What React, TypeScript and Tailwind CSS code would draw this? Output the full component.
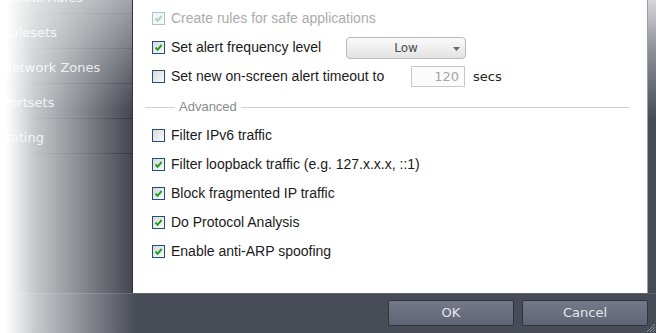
import React from 'react';

const dejavu = { fontFamily: '"DejaVu Sans", Verdana, sans-serif' };

const SIDE_ITEMS = ['Global Rules', 'Rulesets', 'Network Zones', 'Portsets', 'Rating'];

const Check: React.FC<{ checked?: boolean; disabled?: boolean }> = ({ checked, disabled }) => (
  <span
    className={`flex h-[13px] w-[13px] shrink-0 items-center justify-center border ${
      disabled ? 'border-[#a9c0d8] bg-[#f4f6f8]' : 'border-[#1f4f7f] bg-gradient-to-br from-[#d9d9d9] to-[#fbfbfb]'
    }`}
  >
    {checked && (
      <svg width="11" height="11" viewBox="0 0 11 11">
        <path
          d="M2.5 5.5 L4.6 7.8 L8.6 3"
          fill="none"
          stroke={disabled ? '#a6d8a6' : '#22a022'}
          strokeWidth="2"
        />
      </svg>
    )}
  </span>
);

const Row: React.FC<{ checked?: boolean; disabled?: boolean; children: React.ReactNode }> = ({
  checked,
  disabled,
  children,
}) => (
  <div className="flex h-[29px] items-center gap-[6px] pl-[19px]">
    <Check checked={checked} disabled={disabled} />
    {children}
  </div>
);

const App: React.FC = () => {
  return (
    <div
      className="relative flex h-[333px] w-[656px] flex-col overflow-hidden bg-[#484c57]"
      style={{ fontFamily: '"Liberation Sans", Arial, sans-serif' }}
    >
      <div className="flex h-[293px]">
        {/* Sidebar */}
        <div className="relative w-[133px] shrink-0 border-r border-[#2c2f36] bg-[#3e424c]" style={dejavu}>
          <div className="-mt-[21px] flex flex-col">
            {SIDE_ITEMS.map((item) => (
              <div
                key={item}
                className="flex h-[35px] items-center border-b border-[#2b2e35] pl-[2px] pt-[3px] text-[13px] text-[#dcdde0]"
              >
                {item}
              </div>
            ))}
          </div>
          <div className="pointer-events-none absolute inset-0 bg-[linear-gradient(to_bottom,rgba(255,255,255,0.5),rgba(255,255,255,0)_110px)]" />
        </div>

        {/* Main panel */}
        <div className="flex flex-1 flex-col bg-white pt-[4px] text-[14px] text-[#1a1a1a]">
          <Row checked disabled>
            <span className="text-[#ababab]">Create rules for safe applications</span>
          </Row>
          <Row checked>
            <span className="w-[169px]">Set alert frequency level</span>
            <div
              className="relative flex h-[22px] w-[120px] items-center justify-center rounded-[4px] border border-[#b9b9b9] bg-gradient-to-b from-[#fafafa] to-[#e3e3e3] text-[12px] text-[#4a4a4a]"
              style={dejavu}
            >
              Low
              <svg className="absolute right-[5px] top-[9px]" width="7" height="4" viewBox="0 0 7 4">
                <path d="M0 0 H7 L3.5 4 Z" fill="#6a6a6a" />
              </svg>
            </div>
          </Row>
          <Row>
            <span className="w-[234px]">Set new on-screen alert timeout to</span>
            <div
              className="flex h-[21px] w-[54px] items-center justify-end border border-[#c9c9c9] bg-[#fbfbfb] pr-[5px] text-[13px] text-[#a5a5a5]"
              style={dejavu}
            >
              120
            </div>
            <span className="ml-[2px] text-[13px] text-[#222]" style={dejavu}>
              secs
            </span>
          </Row>

          <div className="flex h-[29px] items-center gap-[4px] pl-[12px] pr-[17px] pt-[3px]">
            <div className="h-px w-[30px] bg-[#d2d2d2]" />
            <span className="text-[13px] text-[#8a8a8a]">Advanced</span>
            <div className="h-px flex-1 bg-[#d2d2d2]" />
          </div>

          <div className="pt-[1px]">
            <Row>
              <span>Filter IPv6 traffic</span>
            </Row>
            <Row checked>
              <span>Filter loopback traffic (e.g. 127.x.x.x, ::1)</span>
            </Row>
            <Row checked>
              <span>Block fragmented IP traffic</span>
            </Row>
            <Row checked>
              <span>Do Protocol Analysis</span>
            </Row>
            <Row checked>
              <span>Enable anti-ARP spoofing</span>
            </Row>
          </div>
        </div>

        {/* Right edge */}
        <div className="w-[9px] shrink-0 border-l border-[#9a9da5] bg-[linear-gradient(to_bottom,#d6d7da,#8d9099_50px,#474b56_120px)]" />
      </div>

      {/* Bottom bar */}
      <div className="flex h-[40px] items-start justify-end gap-[8px] border-t border-[#5f636d] pr-[8px] pt-[6px]" style={dejavu}>
        <button className="h-[26px] w-[126px] rounded-[2px] border border-[#30333b] bg-gradient-to-b from-[#737989] to-[#5f6575] text-[13px] text-[#e4e6ea]">
          OK
        </button>
        <button className="h-[26px] w-[126px] rounded-[2px] border border-[#30333b] bg-gradient-to-b from-[#737989] to-[#5f6575] text-[13px] text-[#e4e6ea]">
          Cancel
        </button>
      </div>

      {/* resize grip */}
      <svg className="absolute bottom-0 right-0" width="11" height="11" viewBox="0 0 11 11">
        <path d="M10 2 L2 10 M10 5 L5 10 M10 8 L8 10" stroke="#8d919b" strokeWidth="1" />
      </svg>

      {/* left fade over sidebar and bottom bar */}
      <div className="pointer-events-none absolute bottom-0 left-0 top-0 w-[136px] bg-[linear-gradient(to_right,#ffffff_6px,rgba(255,255,255,0.7)_35px,rgba(255,255,255,0)_136px)]" />
    </div>
  );
};

export default App;
